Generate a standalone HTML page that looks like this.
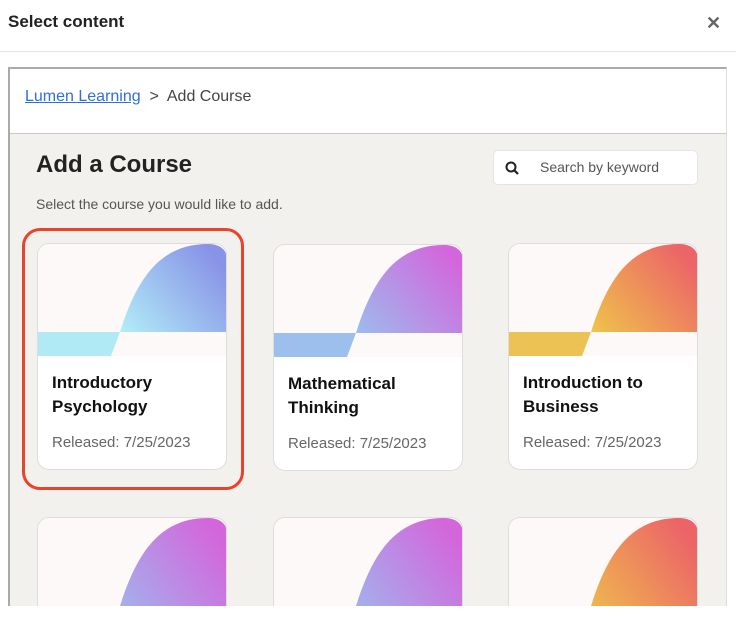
<!DOCTYPE html>
<html><head><meta charset="utf-8"><style>
*{box-sizing:border-box;margin:0;padding:0}
html,body{width:736px;height:620px;overflow:hidden}
body{background:#fff;font-family:"Liberation Sans",sans-serif;position:relative}
.title{position:absolute;left:8px;top:12px;font-size:17px;font-weight:bold;color:#222}
.x{position:absolute;left:706px;top:13px;font-size:18px;color:#666;font-weight:bold}
.sep{position:absolute;left:0;top:51px;width:736px;height:1px;background:#e2e2e2}
.panel{position:absolute;left:8px;top:67px;width:719px;height:539px;background:#f2f1ee;border-left:2px solid #aaa;border-top:2px solid #aaa;border-right:1px solid #ddd;overflow:hidden}
.head{position:absolute;left:0;top:0;width:100%;height:65px;background:#fff;border-bottom:1px solid #c8c8c8}
.crumb{position:absolute;left:15px;top:19px;font-size:16px;color:#444}
.crumb a{color:#2f6fd6;text-decoration:underline}
h1{position:absolute;left:26px;top:82px;font-size:24px;font-weight:bold;color:#222}
.sub{position:absolute;left:26px;top:127px;font-size:14px;color:#555}
.search{position:absolute;left:483px;top:81px;width:205px;height:35px;background:#fff;border:1px solid #e4e4e4;border-radius:5px;font-size:14px;color:#555;padding:8px 0 0 46px}
.search svg{position:absolute;left:11px;top:10px}
.card{position:absolute;width:190px;height:227px;background:#fff;border:1px solid #ddd;border-radius:12px;overflow:hidden}
.card svg{display:block}
.ct{position:absolute;left:14px;top:127px;font-size:17px;font-weight:bold;color:#111;line-height:24px}
.cd{position:absolute;left:14px;top:190px;font-size:15px;color:#666}
.ring{position:absolute;left:12px;top:159px;width:222px;height:262px;border:3px solid #e8432b;border-radius:18px}
</style></head><body>
<div class="title">Select content</div>
<div class="x">✕</div>
<div class="sep"></div>
<div class="panel">
<div class="head"><div class="crumb"><a>Lumen Learning</a> &nbsp;&gt;&nbsp; Add Course</div></div>
<h1>Add a Course</h1>
<div class="search"><svg width="14" height="14" viewBox="0 0 14 14"><circle cx="6" cy="6" r="4.5" fill="none" stroke="#222" stroke-width="2"/><path d="M9.3 9.3L13 13" stroke="#222" stroke-width="2.2"/></svg>Search by keyword</div>
<div class="sub">Select the course you would like to add.</div>
<div class="ring"></div>

<div class="card" style="left:27px;top:174px">
<svg width="190" height="112"><defs><linearGradient id="g1" x1="0" y1="1" x2="1" y2="0.3"><stop offset="0" stop-color="#b2eef8"/><stop offset="1" stop-color="#8892e6"/></linearGradient></defs><rect width="190" height="112" fill="#fcf9f8"/><path d="M82 88 C100 30 125 0 170 0 Q190 0 190 20 L190 88Z" fill="url(#g1)"/><path d="M0 88 L82 88 L73 112 L0 112Z" fill="#b0ebf5"/></svg>
<div class="ct">Introductory<br>Psychology</div><div class="cd">Released: 7/25/2023</div></div>

<div class="card" style="left:263px;top:175px">
<svg width="190" height="112"><defs><linearGradient id="g2" x1="0" y1="1" x2="1" y2="0.3"><stop offset="0" stop-color="#9cbcee"/><stop offset="1" stop-color="#d466dc"/></linearGradient></defs><rect width="190" height="112" fill="#fcf9f8"/><path d="M82 88 C100 30 125 0 170 0 Q190 0 190 20 L190 88Z" fill="url(#g2)"/><path d="M0 88 L82 88 L73 112 L0 112Z" fill="#9dbfee"/></svg>
<div class="ct">Mathematical<br>Thinking</div><div class="cd">Released: 7/25/2023</div></div>

<div class="card" style="left:498px;top:174px">
<svg width="190" height="112"><defs><linearGradient id="g3" x1="0" y1="1" x2="1" y2="0.3"><stop offset="0" stop-color="#efc44a"/><stop offset="1" stop-color="#ec6468"/></linearGradient></defs><rect width="190" height="112" fill="#fcf9f8"/><path d="M82 88 C100 30 125 0 170 0 Q190 0 190 20 L190 88Z" fill="url(#g3)"/><path d="M0 88 L82 88 L73 112 L0 112Z" fill="#ebc253"/></svg>
<div class="ct">Introduction to<br>Business</div><div class="cd">Released: 7/25/2023</div></div>

<div class="card" style="left:27px;top:448px"><svg width="190" height="112"><rect width="190" height="112" fill="#fcf9f8"/><path d="M82 88 C100 30 125 0 170 0 Q190 0 190 20 L190 112 L75 112Z" fill="url(#g2)"/></svg></div>
<div class="card" style="left:263px;top:448px"><svg width="190" height="112"><rect width="190" height="112" fill="#fcf9f8"/><path d="M82 88 C100 30 125 0 170 0 Q190 0 190 20 L190 112 L75 112Z" fill="url(#g2)"/></svg></div>
<div class="card" style="left:498px;top:448px"><svg width="190" height="112"><rect width="190" height="112" fill="#fcf9f8"/><path d="M82 88 C100 30 125 0 170 0 Q190 0 190 20 L190 112 L75 112Z" fill="url(#g3)"/></svg></div>
</div>
</body></html>
